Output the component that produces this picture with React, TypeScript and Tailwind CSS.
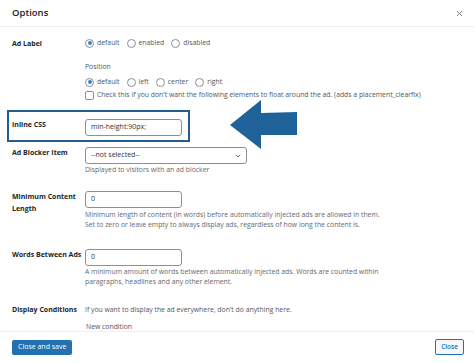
import { X, ChevronDown } from "lucide-react"

function Radio({ label, checked }: { label: string; checked?: boolean }) {
	return (
		<span className="flex items-center gap-[3px]">
			<span className="flex h-[9px] w-[9px] items-center justify-center rounded-full border border-[#8c8f94] bg-white">
				{checked && <span className="h-[4px] w-[4px] rounded-full bg-[#3582c4]" />}
			</span>
			<span>{label}</span>
		</span>
	)
}

function Label({ children }: { children: React.ReactNode }) {
	return <div className="text-[7px] font-bold leading-[12px] text-[#1d2327]">{children}</div>
}

function TextInput({ value }: { value: string }) {
	return (
		<div className="flex h-[17px] w-[97px] items-center rounded-[3px] border border-[#8c8f94] bg-white px-[5px] text-[7px] text-[#2c3338]">
			{value}
		</div>
	)
}

function Help({ children }: { children: React.ReactNode }) {
	return <p className="text-[6.85px] leading-[10.5px] text-[#646970]">{children}</p>
}

export default function App() {
	return (
		<div className="relative flex h-[363px] w-[474px] flex-col overflow-hidden bg-white font-['Open_Sans','Noto_Sans',sans-serif] text-[#50575e]">
			{/* Header */}
			<div className="flex h-[27px] shrink-0 items-center justify-between border-b border-[#f0f0f0] pl-[12px] pr-[10px]">
				<h1 className="text-[9.5px] font-semibold text-[#1d2327]">Options</h1>
				<X className="h-[9px] w-[9px] text-[#787c82]" strokeWidth={2.5} />
			</div>

			{/* Body */}
			<div className="flex-1 overflow-hidden pl-[12px]">
				<div className="mt-[10px] grid grid-cols-[73px_1fr]">
					<div className="pt-[1px]">
						<Label>Ad Label</Label>
					</div>
					<div className="text-[6.85px]">
						<div className="flex h-[13px] items-center gap-[7px]">
							<Radio label="default" checked />
							<Radio label="enabled" />
							<Radio label="disabled" />
						</div>
						<div className="mt-[10px] leading-[13px] text-[#50575e]">Position</div>
						<div className="mt-[3px] flex h-[13px] items-center gap-[7px]">
							<Radio label="default" checked />
							<Radio label="left" />
							<Radio label="center" />
							<Radio label="right" />
						</div>
						<div className="flex h-[13px] items-center gap-[3px]">
							<span className="h-[9px] w-[9px] rounded-[2px] border border-[#8c8f94] bg-white" />
							<span>Check this if you don't want the following elements to float around the ad. (adds a placement_clearfix)</span>
						</div>
					</div>
				</div>

				<div className="mt-[17px] grid grid-cols-[73px_1fr]">
					<Label>Inline CSS</Label>
					<TextInput value="min-height:90px;" />
				</div>

				<div className="mt-[11px] grid grid-cols-[73px_1fr]">
					<Label>Ad Blocker Item</Label>
					<div>
						<div className="flex h-[17px] w-[162px] items-center justify-between rounded-[3px] border border-[#8c8f94] bg-white pl-[5px] pr-[4px] text-[7px] text-[#2c3338]">
							<span>--not selected--</span>
							<ChevronDown className="h-[8px] w-[8px] text-[#50575e]" strokeWidth={2.5} />
						</div>
						<div className="mt-[1px]">
							<Help>Displayed to visitors with an ad blocker</Help>
						</div>
					</div>
				</div>

				<div className="mt-[15px] grid grid-cols-[73px_1fr]">
					<Label>
						Minimum Content
						<br />
						Length
					</Label>
					<div>
						<TextInput value="0" />
						<div className="mt-[2px]">
							<Help>
								Minimum length of content (in words) before automatically injected ads are allowed in them.
								<br />
								Set to zero or leave empty to always display ads, regardless of how long the content is.
							</Help>
						</div>
					</div>
				</div>

				<div className="mt-[18px] grid grid-cols-[73px_1fr]">
					<Label>Words Between Ads</Label>
					<div>
						<TextInput value="0" />
						<div className="mt-[1px]">
							<Help>
								A minimum amount of words between automatically injected ads. Words are counted within
								<br />
								paragraphs, headlines and any other element.
							</Help>
						</div>
					</div>
				</div>

				<div className="mt-[16px] grid grid-cols-[73px_1fr]">
					<Label>Display Conditions</Label>
					<div className="text-[6.85px] leading-[12px]">
						<p>If you want to display the ad everywhere, don't do anything here.</p>
						<p className="mt-[5px] pl-[1px]">New condition</p>
					</div>
				</div>
			</div>

			{/* Footer */}
			<div className="flex h-[32px] shrink-0 items-center justify-between border-t border-[#f0f0f0] pl-[12px] pr-[10px] pb-[1px]">
				<button className="h-[15px] rounded-[2px] bg-[#2271b1] px-[6px] text-[7px] text-white">Close and save</button>
				<button className="h-[16px] rounded-[2px] border border-[#2271b1] bg-[#f6f7f7] px-[5px] text-[6.5px] font-semibold text-[#2271b1]">
					Close
				</button>
			</div>

			{/* Annotation: highlight box and arrow */}
			<div className="pointer-events-none absolute left-[7px] top-[110px] h-[32px] w-[183px] border-2 border-[#245e90]" />
			<svg className="pointer-events-none absolute left-0 top-0" width="474" height="363" viewBox="0 0 474 363">
				<polygon points="230,125 261,100 261,113 297,112 297,135 261,135 261,149" fill="#1f6199" />
			</svg>
		</div>
	)
}
